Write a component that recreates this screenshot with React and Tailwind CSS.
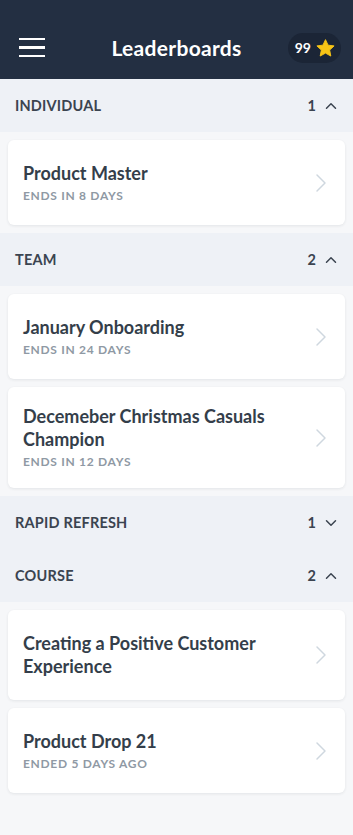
import { ChevronRight, ChevronUp, ChevronDown } from 'lucide-react';

const sections = [
  {
    name: 'INDIVIDUAL',
    count: 1,
    open: true,
    items: [{ title: 'Product Master', sub: 'ENDS IN 8 DAYS' }],
  },
  {
    name: 'TEAM',
    count: 2,
    open: true,
    items: [
      { title: 'January Onboarding', sub: 'ENDS IN 24 DAYS' },
      { title: 'Decemeber Christmas Casuals Champion', sub: 'ENDS IN 12 DAYS' },
    ],
  },
  { name: 'RAPID REFRESH', count: 1, open: false, items: [] },
  {
    name: 'COURSE',
    count: 2,
    open: true,
    items: [
      { title: 'Creating a Positive Customer Experience', tall: true },
      { title: 'Product Drop 21', sub: 'ENDED 5 DAYS AGO' },
    ],
  },
];

function Star() {
  return (
    <svg width="19" height="18" viewBox="0 0 24 23" className="block">
      <path
        d="M12 0.8l3.3 7.1 7.7 0.9-5.7 5.3 1.5 7.7L12 18l-6.8 3.8 1.5-7.7L1 8.8l7.7-0.9z"
        fill="#f7c416"
        stroke="#f7c416"
        strokeWidth="1.2"
        strokeLinejoin="round"
      />
    </svg>
  );
}

function Card({ item }) {
  return (
    <div
      className={`flex items-center rounded-md bg-white pl-[15px] pr-[8px] shadow-[0_1px_3px_rgba(30,40,60,0.09)] ${
        item.tall ? 'py-[22px]' : 'min-h-[85px] py-[18px]'
      }`}
    >
      <div className="flex-1 min-w-0 pr-5">
        <div className="text-[18px] leading-[23px] font-bold text-[#343e4a]">{item.title}</div>
        {item.sub && (
          <div className="mt-[3px] text-[12px] leading-[16px] font-bold tracking-[0.7px] text-[#8f99a4]">
            {item.sub}
          </div>
        )}
      </div>
      <ChevronRight size={32} strokeWidth={1.1} className="text-[#cfd7df] shrink-0" />
    </div>
  );
}

export default function App() {
  return (
    <div className="min-h-[835px] bg-[#f6f7f9] font-['Lato',sans-serif]">
      <header className="grid h-[79px] grid-cols-[1fr_auto_1fr] items-center bg-[#232f42] px-[12px] pt-[16px]">
        <div className="pl-[7px]">
          <div className="flex w-[26px] flex-col gap-[6px]">
            <span className="h-[2.5px] bg-white" />
            <span className="h-[2.5px] bg-white" />
            <span className="h-[2.5px] bg-white" />
          </div>
        </div>
        <h1 className="text-[21px] font-bold tracking-[0.3px] text-white">Leaderboards</h1>
        <div className="flex justify-end">
          <div className="flex h-[30px] items-center gap-[5px] rounded-full bg-[#1b2536] pl-[7px] pr-[6px]">
            <span className="text-[14px] font-bold text-white">99</span>
            <Star />
          </div>
        </div>
      </header>

      {sections.map((s) => (
        <section key={s.name}>
          <div className="flex h-[53px] items-center justify-between bg-[#eef1f6] pl-[15px] pr-[13px]">
            <span className="text-[14.5px] font-bold tracking-[0.2px] text-[#3b4450]">{s.name}</span>
            <div className="flex items-center gap-[6px] text-[#3b4450]">
              <span className="text-[14.5px] font-bold">{s.count}</span>
              {s.open ? (
                <ChevronUp size={18} strokeWidth={2} />
              ) : (
                <ChevronDown size={18} strokeWidth={2} />
              )}
            </div>
          </div>
          {s.open && (
            <div className="flex flex-col gap-2 px-2 py-2">
              {s.items.map((it) => (
                <Card key={it.title} item={it} />
              ))}
            </div>
          )}
        </section>
      ))}
    </div>
  );
}
